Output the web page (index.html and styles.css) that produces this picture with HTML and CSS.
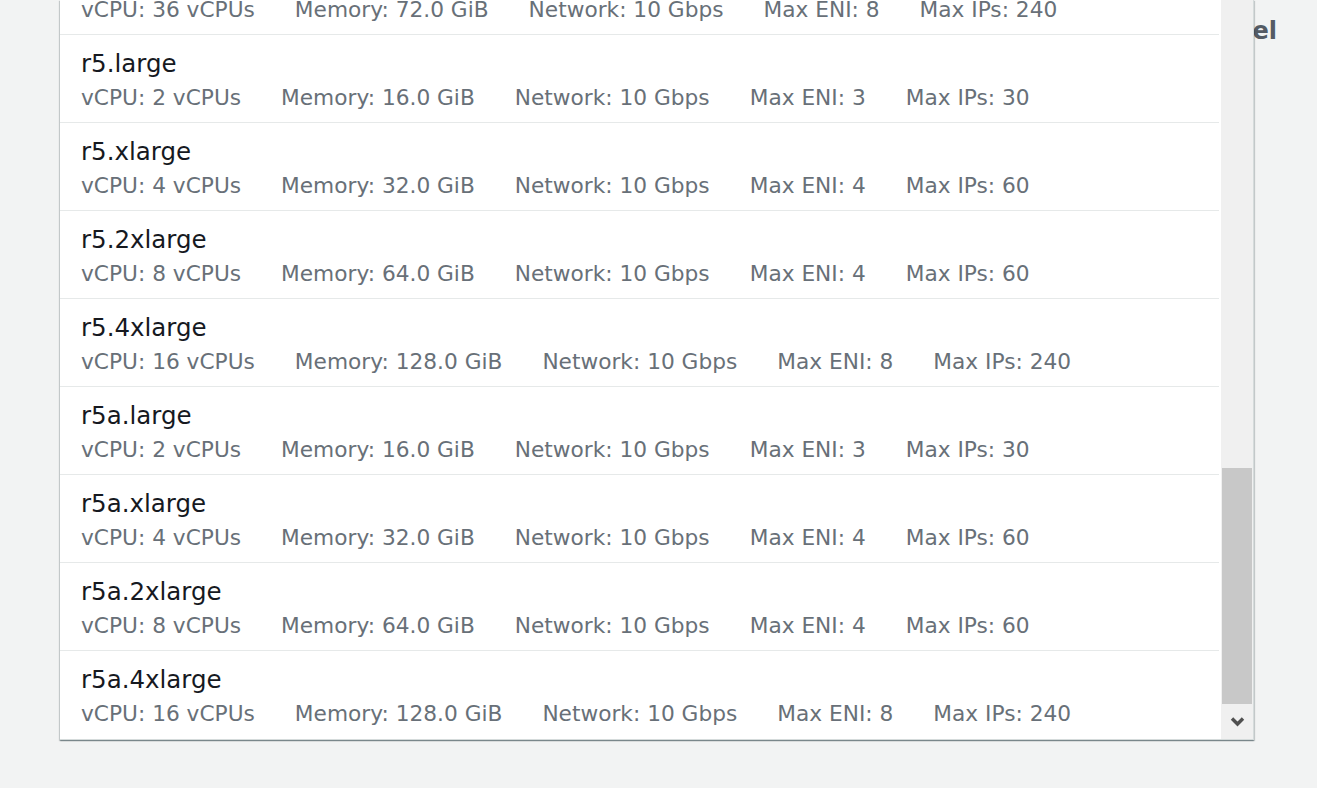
FILE: index.html
```html
<!DOCTYPE html>
<html lang="en">
<head>
  <meta charset="UTF-8">
  <title>Instance type</title>
  <link rel="stylesheet" href="styles.css">
</head>
<body>

  <div class="page">
    <div class="actions">
      <button class="link-button">Cancel</button>
    </div>
  </div>

  <div class="dropdown">
    <div class="options">
      <ul class="option-list">
        <li class="option">
          <div class="option-name">c5.9xlarge</div>
          <div class="option-desc"><span>vCPU: 36 vCPUs</span><span>Memory: 72.0 GiB</span><span>Network: 10 Gbps</span><span>Max ENI: 8</span><span>Max IPs: 240</span></div>
        </li>
        <li class="option">
          <div class="option-name">r5.large</div>
          <div class="option-desc"><span>vCPU: 2 vCPUs</span><span>Memory: 16.0 GiB</span><span>Network: 10 Gbps</span><span>Max ENI: 3</span><span>Max IPs: 30</span></div>
        </li>
        <li class="option">
          <div class="option-name">r5.xlarge</div>
          <div class="option-desc"><span>vCPU: 4 vCPUs</span><span>Memory: 32.0 GiB</span><span>Network: 10 Gbps</span><span>Max ENI: 4</span><span>Max IPs: 60</span></div>
        </li>
        <li class="option">
          <div class="option-name">r5.2xlarge</div>
          <div class="option-desc"><span>vCPU: 8 vCPUs</span><span>Memory: 64.0 GiB</span><span>Network: 10 Gbps</span><span>Max ENI: 4</span><span>Max IPs: 60</span></div>
        </li>
        <li class="option">
          <div class="option-name">r5.4xlarge</div>
          <div class="option-desc"><span>vCPU: 16 vCPUs</span><span>Memory: 128.0 GiB</span><span>Network: 10 Gbps</span><span>Max ENI: 8</span><span>Max IPs: 240</span></div>
        </li>
        <li class="option">
          <div class="option-name">r5a.large</div>
          <div class="option-desc"><span>vCPU: 2 vCPUs</span><span>Memory: 16.0 GiB</span><span>Network: 10 Gbps</span><span>Max ENI: 3</span><span>Max IPs: 30</span></div>
        </li>
        <li class="option">
          <div class="option-name">r5a.xlarge</div>
          <div class="option-desc"><span>vCPU: 4 vCPUs</span><span>Memory: 32.0 GiB</span><span>Network: 10 Gbps</span><span>Max ENI: 4</span><span>Max IPs: 60</span></div>
        </li>
        <li class="option">
          <div class="option-name">r5a.2xlarge</div>
          <div class="option-desc"><span>vCPU: 8 vCPUs</span><span>Memory: 64.0 GiB</span><span>Network: 10 Gbps</span><span>Max ENI: 4</span><span>Max IPs: 60</span></div>
        </li>
        <li class="option">
          <div class="option-name">r5a.4xlarge</div>
          <div class="option-desc"><span>vCPU: 16 vCPUs</span><span>Memory: 128.0 GiB</span><span>Network: 10 Gbps</span><span>Max ENI: 8</span><span>Max IPs: 240</span></div>
        </li>
      </ul>
    </div>
    <div class="scrollbar">
      <div class="scroll-track"></div>
      <div class="scroll-thumb"></div>
      <div class="scroll-down">
        <svg width="15" height="11" viewBox="0 0 15 11">
          <path d="M2 2.5 L7.5 8 L13 2.5" fill="none" stroke="#505050" stroke-width="3.4"/>
        </svg>
      </div>
    </div>
  </div>

</body>
</html>
```

FILE: styles.css
```css
body {
  margin: 0;
  padding: 0;
  font-family: "DejaVu Sans", Arial, sans-serif;
  background-color: #f2f3f3;
  color: #16191f;
  height: 100vh;
  overflow: hidden;
}

.page {
  padding-top: 12px;
}

.actions {
  display: flex;
  justify-content: flex-end;
  padding-right: 40px;
}

.link-button {
  background: none;
  border: none;
  padding: 0;
  font-family: inherit;
  font-size: 24px;
  font-weight: 700;
  line-height: 38px;
  color: #545b64;
  cursor: pointer;
}

.dropdown {
  position: absolute;
  top: 0;
  left: 60px;
  width: 1193px;
  height: 739px;
  display: flex;
  background-color: white;
  border-right: 1px solid #d5dbdb;
  border-bottom: 1px solid #d5dbdb;
  box-shadow: 0 1px 1px 0 rgba(0, 28, 36, 0.3), 1px 1px 1px 0 rgba(0, 28, 36, 0.15), -1px 1px 1px 0 rgba(0, 28, 36, 0.15);
}

.options {
  flex: 1;
  overflow: hidden;
}

.option-list {
  list-style: none;
  margin: -53px 0 0;
  padding: 0 2px 0 0;
}

.option {
  height: 88px;
  box-sizing: border-box;
  padding: 12px 21px 0;
  border-bottom: 1px solid #e6e9e9;
}

.option:last-child {
  border-bottom: none;
}

.option-name {
  font-size: 24.5px;
  line-height: 34px;
  color: #16191f;
}

.option-desc {
  display: flex;
  gap: 40px;
  font-size: 21.7px;
  line-height: 34px;
  color: #687078;
  white-space: nowrap;
}

.scrollbar {
  width: 32px;
  display: flex;
  flex-direction: column;
  background-color: #f0f0f0;
}

.scroll-track {
  flex: 1;
}

.scroll-thumb {
  height: 236px;
  margin: 0 1px;
  background-color: #c8c8c8;
}

.scroll-down {
  height: 35px;
  display: flex;
  align-items: center;
  justify-content: center;
}
```
